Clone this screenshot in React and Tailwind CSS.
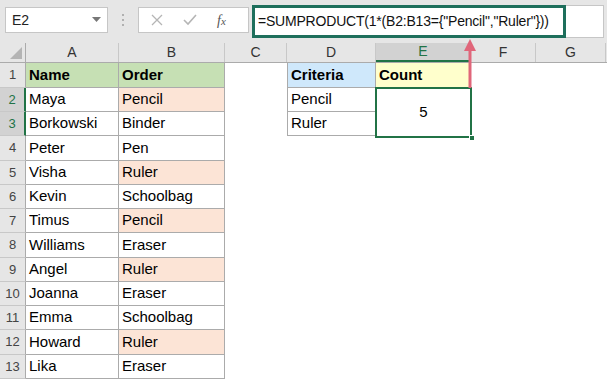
import React from "react";

const rows = [
  ["Maya", "Pencil", true],
  ["Borkowski", "Binder", false],
  ["Peter", "Pen", false],
  ["Visha", "Ruler", true],
  ["Kevin", "Schoolbag", false],
  ["Timus", "Pencil", true],
  ["Williams", "Eraser", false],
  ["Angel", "Ruler", true],
  ["Joanna", "Eraser", false],
  ["Emma", "Schoolbag", false],
  ["Howard", "Ruler", true],
  ["Lika", "Eraser", false],
];

const heights = [25, 24, 24, 25, 24, 24, 24, 25, 24, 24, 24, 25, 24];

const cols = [
  ["A", "w-[93px]"],
  ["B", "w-[106px]"],
  ["C", "w-[62px]"],
  ["D", "w-[89px]"],
  ["E", "w-[95px]"],
  ["F", "w-[65px]"],
  ["G", "w-[70px]"],
];

const formula = '=SUMPRODUCT(1*(B2:B13={"Pencil","Ruler"}))';

export default function App() {
  return (
    <div
      className="relative w-[607px] h-[383px] overflow-hidden bg-white text-black"
      style={{ fontFamily: '"Liberation Sans", Arial, sans-serif' }}
    >
      {/* top formula strip */}
      <div className="h-[43px] bg-[#e6e6e6] flex items-start pt-[7px]">
        <div className="ml-[5px] w-[103px] h-[26px] bg-white border border-[#c6c6c6] flex items-center justify-between pl-[6px] pr-[6px]">
          <span className="text-[14px] text-[#222]">E2</span>
          <svg width="9" height="6" viewBox="0 0 9 6">
            <path d="M0 0 L9 0 L4.5 5 Z" fill="#777" />
          </svg>
        </div>
        <div className="w-[30px] h-[26px] flex flex-col items-center justify-center gap-[3px]">
          <div className="w-[2px] h-[2px] bg-[#b0b0b0]" />
          <div className="w-[2px] h-[2px] bg-[#b0b0b0]" />
          <div className="w-[2px] h-[2px] bg-[#b0b0b0]" />
        </div>
        <div className="w-[111px] h-[26px] bg-white border border-[#c6c6c6] flex items-center pl-[12px]">
          <svg width="12" height="12" viewBox="0 0 12 12" className="mr-[20px]">
            <path d="M1 1 L11 11 M11 1 L1 11" stroke="#b5b5b5" strokeWidth="1.3" fill="none" />
          </svg>
          <svg width="14" height="12" viewBox="0 0 14 12" className="mr-[20px]">
            <path d="M1 6 L5 10 L13 1" stroke="#b5b5b5" strokeWidth="1.6" fill="none" />
          </svg>
          <span
            className="text-[14px] italic text-[#555]"
            style={{ fontFamily: '"Liberation Serif", "Times New Roman", serif' }}
          >
            f<span className="text-[11px]">x</span>
          </span>
        </div>
        <div className="relative ml-[3px] mt-[-2px] w-[352px] h-[33px] bg-white border border-[#c6c6c6]">
          <div className="absolute left-[-1px] top-[-1px] w-[314px] h-[33px] border-[3px] border-[#1e6f5c] flex items-center pl-[3px]">
            <span className="text-[14px] tracking-[-0.2px] text-[#111] whitespace-nowrap">{formula}</span>
          </div>
        </div>
      </div>

      {/* column header row */}
      <div className="flex h-[20px] bg-[#e6e6e6] border-b border-[#ababab]">
        <div className="w-[26px] h-full border-r border-[#ababab] relative">
          <svg className="absolute right-[3px] bottom-[3px]" width="12" height="12" viewBox="0 0 12 12">
            <path d="M12 0 L12 12 L0 12 Z" fill="#b4b4b4" />
          </svg>
        </div>
        {cols.map(([c, w]) => (
          <div
            key={c}
            className={`${w} h-full flex items-center justify-center text-[14px] border-r border-[#c8c8c8] ${
              c === "E" ? "bg-[#d2d2d2] text-[#217346] border-b-2 border-b-[#217346]" : "text-[#333]"
            }`}
          >
            {c}
          </div>
        ))}
      </div>

      {/* data rows */}
      {heights.map((h, i) => {
        const r = i + 1;
        const data = r >= 2 ? rows[r - 2] : null;
        const selRow = r === 2 || r === 3;
        return (
          <div key={r} className="flex text-[15px]" style={{ height: h }}>
            <div
              className={`w-[26px] h-full flex items-center justify-center text-[13px] border-b border-[#c8c8c8] ${
                selRow
                  ? "bg-[#d2d2d2] text-[#217346] border-r-2 border-r-[#217346]"
                  : "bg-[#e6e6e6] text-[#444] border-r border-r-[#ababab]"
              }`}
            >
              {r}
            </div>
            {/* A */}
            <div
              className={`w-[93px] h-full flex items-center pl-[3px] border-r border-b border-[#ababab] ${
                r === 1 ? "bg-[#c6e0b4] font-bold" : ""
              }`}
            >
              {r === 1 ? "Name" : data[0]}
            </div>
            {/* B */}
            <div
              className={`w-[106px] h-full flex items-center pl-[3px] border-r border-b border-[#ababab] ${
                r === 1 ? "bg-[#c6e0b4] font-bold" : data[2] ? "bg-[#fce4d6]" : ""
              }`}
            >
              {r === 1 ? "Order" : data[1]}
            </div>
            {/* C */}
            <div className="w-[62px] h-full" />
            {/* D */}
            {r <= 3 ? (
              <div
                className={`w-[89px] h-full flex items-center pl-[3px] border-l border-r border-b border-[#ababab] ${
                  r === 1 ? "bg-[#cfe8fb] font-bold" : ""
                }`}
              >
                {r === 1 ? "Criteria" : r === 2 ? "Pencil" : "Ruler"}
              </div>
            ) : (
              <div className="w-[89px] h-full" />
            )}
            {/* E */}
            {r === 1 ? (
              <div className="w-[95px] h-full flex items-center pl-[3px] bg-[#ffffcc] font-bold border-b border-[#ababab]">
                Count
              </div>
            ) : (
              <div className="w-[95px] h-full" />
            )}
          </div>
        );
      })}

      {/* merged selected cell E2:E3 */}
      <div className="absolute left-[375px] top-[87px] w-[97px] h-[51px] border-2 border-[#217346] bg-white flex items-center justify-center text-[15px]">
        5
        <div className="absolute right-[-5px] bottom-[-5px] w-[6px] h-[6px] bg-[#217346] border border-white" />
      </div>

      {/* arrow */}
      <svg className="absolute left-[463px] top-[37px]" width="14" height="53" viewBox="0 0 14 53">
        <path d="M7 8 L7 51" stroke="#e0667a" strokeWidth="3" />
        <path d="M7 2 L13 14 L1 14 Z" fill="#e0667a" />
      </svg>
    </div>
  );
}
